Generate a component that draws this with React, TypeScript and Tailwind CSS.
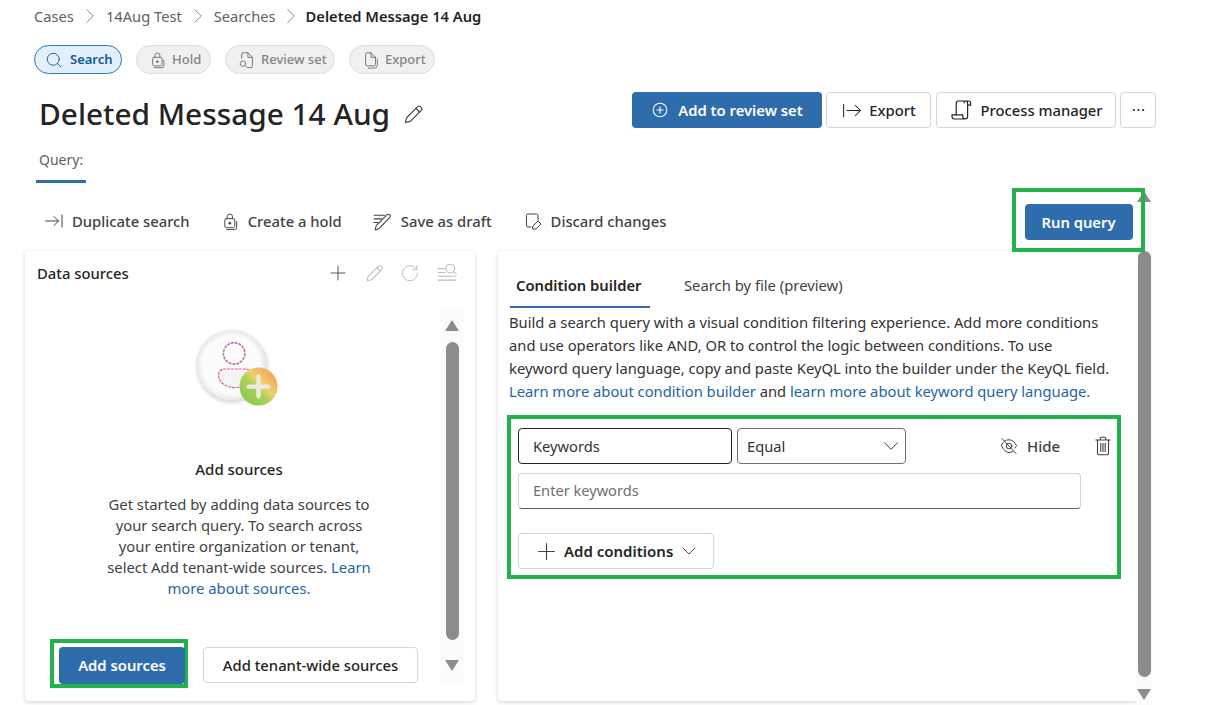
import { ChevronDown, ChevronRight, Plus, Search } from "lucide-react";

const font = "font-['Noto_Sans','Open_Sans',sans-serif]";

function Icon({ className, children }: { className?: string; children: React.ReactNode }) {
  return (
    <svg viewBox="0 0 20 20" fill="none" stroke="currentColor" strokeWidth="1" strokeLinecap="round" strokeLinejoin="round" className={className}>
      {children}
    </svg>
  );
}

const LockDoc = ({ className }: { className?: string }) => (
  <Icon className={className}>
    <rect x="4" y="7" width="10.5" height="9.5" rx="1.5" />
    <path d="M6.5 7V5a2.8 2.8 0 0 1 5.6 0v2" />
    <circle cx="9.2" cy="11.8" r="1" fill="currentColor" />
    <path d="M16.5 10v6.5a2 2 0 0 1-2 2H6" />
  </Icon>
);

const PencilIcon = ({ className }: { className?: string }) => (
  <Icon className={className}>
    <path d="M3 17l1-4.2L13.6 3.2a1.7 1.7 0 0 1 2.4 0l.8.8a1.7 1.7 0 0 1 0 2.4L7.2 16z" />
    <path d="M12.2 4.6l3.2 3.2" />
  </Icon>
);

function Pill({ label, icon, active, className }: { label: string; icon: React.ReactNode; active?: boolean; className?: string }) {
  return (
    <div
      className={
        (active
          ? "flex h-[29px] items-center gap-[7px] rounded-full border border-[#1a7fc9] bg-[#e3effb] pl-[10px] text-[13px] font-semibold text-[#0f5a96] "
          : "flex h-[29px] items-center gap-[5px] rounded-full border border-[#dcdcdc] bg-[#f0f0f0] pl-[12px] text-[13px] font-medium text-[#858585] ") + (className ?? "")
      }
    >
      {icon}
      {label}
    </div>
  );
}

function OutlineButton({ children, className }: { children: React.ReactNode; className?: string }) {
  return (
    <div className={"flex h-[36px] items-center justify-center rounded border border-[#d6d6d6] bg-white text-[#242424] " + (className ?? "")}>
      {children}
    </div>
  );
}

function ToolItem({ icon, label, className }: { icon: React.ReactNode; label: string; className?: string }) {
  return (
    <div className={"flex items-center gap-[8px] text-[14.8px] font-medium text-[#424242] " + (className ?? "")}>
      {icon}
      {label}
    </div>
  );
}

function Arrow({ down, className }: { down?: boolean; className?: string }) {
  return (
    <svg viewBox="0 0 14 11" className={className}>
      <path d={down ? "M0 0h14L7 11z" : "M7 0l7 11H0z"} fill="#8c8c8c" />
    </svg>
  );
}

function SourcesArt() {
  return (
    <svg viewBox="0 0 90 84" className="h-[82px] w-[88px]">
      <defs>
        <radialGradient id="plate" cx="0.5" cy="0.5" r="0.55">
          <stop offset="0.75" stopColor="#fbfbfb" />
          <stop offset="0.95" stopColor="#e2e2e2" />
          <stop offset="1" stopColor="#eeeeee" />
        </radialGradient>
        <linearGradient id="badge" x1="0" y1="1" x2="1" y2="0">
          <stop offset="0" stopColor="#7fc64a" />
          <stop offset="0.42" stopColor="#a9cf5c" />
          <stop offset="0.58" stopColor="#ecd168" />
          <stop offset="0.85" stopColor="#f4a860" />
          <stop offset="1" stopColor="#e9a0c0" />
        </linearGradient>
        <linearGradient id="dash" x1="0" y1="0" x2="1" y2="1">
          <stop offset="0" stopColor="#9a7bd8" />
          <stop offset="1" stopColor="#d8609a" />
        </linearGradient>
        <filter id="soft">
          <feGaussianBlur stdDeviation="1.6" />
        </filter>
      </defs>
      <circle cx="38" cy="40" r="37" fill="#cfcfcf" filter="url(#soft)" opacity="0.7" />
      <circle cx="37" cy="38" r="36" fill="url(#plate)" />
      <circle cx="40" cy="26" r="11" fill="none" stroke="url(#dash)" strokeWidth="1.6" strokeDasharray="3 1" />
      <path d="M24 48a6 6 0 0 1 6-6h22a6 6 0 0 1 6 6c0 8-8 13-17 13s-17-5-17-13z" fill="#f4f4f4" stroke="#d9608f" strokeWidth="1.2" strokeDasharray="3 1" />
      <circle cx="65" cy="60" r="19.5" fill="url(#badge)" />
      <path d="M65 50v20M55 60h20" stroke="#eeeae2" strokeWidth="4.5" strokeLinecap="round" />
    </svg>
  );
}

export default function App() {
  return (
    <div className={"flex h-[705px] w-[1208px] flex-col overflow-hidden bg-white " + font}>
      <div className="flex h-[32px] items-center pl-[34px] text-[14.7px] text-[#616161]">
        <span>Cases</span>
        <ChevronRight className="mx-[3px] h-[26px] w-[26px] text-[#777]" strokeWidth={0.8} />
        <span>14Aug Test</span>
        <ChevronRight className="mx-[3px] h-[26px] w-[26px] text-[#777]" strokeWidth={0.8} />
        <span>Searches</span>
        <ChevronRight className="mx-[2px] h-[26px] w-[26px] text-[#777]" strokeWidth={0.8} />
        <span className="font-semibold text-[#242424]">Deleted Message 14 Aug</span>
      </div>

      <div className="mt-[13px] flex gap-[14px] pl-[34px]">
        <Pill active className="w-[88px]" label="Search" icon={<Search className="h-[18px] w-[18px]" strokeWidth={1.2} />} />
        <Pill className="w-[75px]" label="Hold" icon={<LockDoc className="h-[18px] w-[18px] text-[#6e6e6e]" />} />
        <Pill
          className="w-[110px]"
          label="Review set"
          icon={
            <Icon className="h-[18px] w-[18px] text-[#6e6e6e]">
              <path d="M4 8V3.5A1.5 1.5 0 0 1 5.5 2H11l5 5v10a1.5 1.5 0 0 1-1.5 1.5H11" />
              <path d="M11 2v5h5" />
              <circle cx="5.5" cy="14" r="3" />
              <path d="M8 16.5l2 2" />
            </Icon>
          }
        />
        <Pill
          className="w-[86px]"
          label="Export"
          icon={
            <Icon className="h-[18px] w-[18px] text-[#6e6e6e]">
              <path d="M4 3.5A1.5 1.5 0 0 1 5.5 2H10l5 5v8a1.5 1.5 0 0 1-1.5 1.5h-8A1.5 1.5 0 0 1 4 15z" />
              <path d="M10 2v5h5" />
              <path d="M17 9v7a3 3 0 0 1-3 3H7" />
            </Icon>
          }
        />
      </div>

      <div className="mt-[18px] flex h-[43px] items-start justify-between pl-[39px] pr-[52px]">
        <div className="flex items-center gap-[12px]">
          <h1 className="text-[29.8px] leading-[44px] font-medium text-[#242424]">Deleted Message 14 Aug</h1>
          <PencilIcon className="h-[23px] w-[23px] text-[#424242]" />
        </div>
        <div className="flex gap-[4px]">
          <div className="flex h-[36px] w-[190px] items-center justify-center gap-[9px] rounded bg-[#2f6cab] text-[14.8px] font-semibold text-white">
            <svg viewBox="0 0 20 20" fill="none" stroke="currentColor" strokeWidth="1.2" className="h-[18px] w-[18px]">
              <circle cx="10" cy="10" r="7.5" />
              <path d="M10 6.2v7.6M6.2 10h7.6" />
            </svg>
            Add to review set
          </div>
          <OutlineButton className="w-[105px] gap-[7px] text-[14.8px] font-medium">
            <Icon className="h-[21px] w-[21px]">
              <path d="M2.5 4v12M5.5 10h13M13.5 5l5 5-5 5" />
            </Icon>
            Export
          </OutlineButton>
          <OutlineButton className="ml-[1px] w-[180px] gap-[7px] text-[14.8px] font-medium">
            <Icon className="h-[24px] w-[24px]">
              <path d="M6 14V4.5A2 2 0 0 1 8 2.5h8.5M16.5 2.5a1.5 1.5 0 0 1 1.5 1.5v2h-2.5V4a1.5 1.5 0 0 0-3 0" />
              <path d="M15.5 6v9.5a2 2 0 0 1-2 2H4.5a2 2 0 0 1-2-2V14h9v1.5a2 2 0 0 0 2 2" />
            </Icon>
            Process manager
          </OutlineButton>
          <OutlineButton className="w-[36px] text-[14px] font-bold">
            <svg viewBox="0 0 14 4" className="h-[4px] w-[13px]" fill="currentColor">
              <circle cx="2" cy="2" r="1.2" />
              <circle cx="7" cy="2" r="1.2" />
              <circle cx="12" cy="2" r="1.2" />
            </svg>
          </OutlineButton>
        </div>
      </div>

      <div className="mt-[12px] ml-[36px] h-[36px] w-[50px] border-b-[3px] border-[#2f6cab] pl-[3px] text-[14px] leading-[26px] text-[#616161]">
        Query:
      </div>

      <div className="-mt-[7px] flex min-h-0 flex-1">
        <div className="flex w-[1137px] shrink-0 flex-col pt-[12px]">
          <div className="flex h-[64px] shrink-0 items-center">
            <div className="mt-[2px] ml-[44px] flex items-center">
              <ToolItem
                label="Duplicate search"
                icon={
                  <Icon className="h-[20px] w-[20px]">
                    <path d="M1.5 10h13M10 5.5l4.5 4.5-4.5 4.5M18 4v12" />
                  </Icon>
                }
              />
              <ToolItem className="ml-[31px]" label="Create a hold" icon={<LockDoc className="h-[19px] w-[19px]" />} />
              <ToolItem
                className="ml-[30px]"
                label="Save as draft"
                icon={
                  <Icon className="h-[21px] w-[21px]">
                    <path d="M2 4h10M2 7.5h7M2 11h4" />
                    <path d="M3 18l1-4L14.5 3.5a1.6 1.6 0 0 1 2.3 0l.2.2a1.6 1.6 0 0 1 0 2.3L6.8 16.6z" />
                  </Icon>
                }
              />
              <ToolItem
                className="ml-[31px]"
                label="Discard changes"
                icon={
                  <Icon className="h-[20px] w-[20px]">
                    <path d="M15 9V4.5A1.5 1.5 0 0 0 13.5 3H5a1.5 1.5 0 0 0-1.5 1.5v10A1.5 1.5 0 0 0 5 16h3" />
                    <path d="M10 15l5-5 3 3-5 5h-3z" />
                  </Icon>
                }
              />
            </div>
            <div className="relative z-10 -mr-[8px] ml-auto flex h-[64px] w-[133px] items-center justify-center border-[4px] border-[#22b14c]">
              <div className="mt-[4px] flex h-[36px] w-[108px] items-center justify-center rounded bg-[#2f6cab] text-[14.8px] leading-[34px] font-semibold text-white">
                Run query
              </div>
            </div>
          </div>

          <div className="-mt-[1px] flex min-h-0 flex-1 pl-[25px]">
            <section className="flex h-[450px] w-[450px] shrink-0 flex-col rounded-[4px] bg-white shadow-[0_1px_4px_rgba(0,0,0,0.18)]">
              <div className="flex h-[44px] shrink-0 items-center pl-[12px] pr-[17px]">
                <span className="text-[14.8px] font-medium text-[#242424]">Data sources</span>
                <Plus className="ml-auto h-[24px] w-[24px] text-[#555]" strokeWidth={1} />
                <PencilIcon className="ml-[14px] h-[21px] w-[21px] text-[#bdbdbd]" />
                <Icon className="ml-[15px] h-[20px] w-[20px] text-[#bdbdbd]">
                  <path d="M16.5 6.5A7.5 7.5 0 1 0 17.5 10M16.8 2.5v4.2h-4.2" />
                </Icon>
                <Icon className="ml-[16px] h-[22px] w-[22px] text-[#bdbdbd]">
                  <path d="M2 6h6M2 9.5h6M2 13h16M2 16.5h16" />
                  <circle cx="13" cy="6" r="4" />
                  <path d="M16 9l2.5 2" />
                </Icon>
              </div>
              <div className="flex min-h-0 flex-1">
                <div className="flex w-[417px] shrink-0 flex-col">
                  <div className="flex w-[417px] flex-col items-center pl-[11px]">
                    <div className="mt-[33px] -ml-[1px]">
                      <SourcesArt />
                    </div>
                    <div className="mt-[47px] text-[15px] leading-[24px] font-medium text-[#242424]">Add sources</div>
                    <p className="mt-[13px] w-[272px] text-center text-[14.8px] leading-[21px] text-[#424242]">
                      Get started by adding data sources to your search query. To search across your entire organization or tenant, select Add tenant-wide sources.{" "}
                      <span className="text-[#2564a6]">Learn</span>
                      <br />
                      <span className="text-[#2564a6]">more about sources.</span>
                    </p>
                  </div>
                  <div className="mt-auto mb-[13px] flex items-start pl-[25px]">
                    <div className="flex h-[49px] w-[138px] items-start justify-end border-[4px] border-[#22b14c] bg-white pt-[4px]">
                      <div className="-mr-[1px] h-[37px] w-[126px] rounded-sm bg-[#2f6cab] text-center text-[14.8px] leading-[36px] font-semibold text-white">
                        Add sources
                      </div>
                    </div>
                    <OutlineButton className="mt-[8px] ml-[15px] w-[215px] text-[14.8px] font-medium">Add tenant-wide sources</OutlineButton>
                  </div>
                </div>
                <div className="mt-[12px] mb-[18px] -ml-[1px] flex w-[22px] flex-col items-center bg-[#fbfbfb] pt-[13px]">
                  <Arrow className="h-[11px] w-[14px]" />
                  <div className="mt-[11px] w-[13px] flex-1 rounded-full bg-[#8c8c8c]" />
                  <Arrow down className="mt-[20px] mb-[12px] h-[11px] w-[14px]" />
                </div>
              </div>
            </section>

            <section className="ml-[23px] flex h-[450px] w-[640px] shrink-0 flex-col rounded-[4px] bg-white px-[11px] shadow-[0_1px_4px_rgba(0,0,0,0.18)]">
              <div className="mt-[16px] flex h-[41px] shrink-0 items-start text-[14.8px]">
                <div className="ml-[1px] h-[41px] w-[140px] border-b-[2px] border-[#2f6cab] pl-[6px] leading-[37px] font-semibold text-[#242424]">
                  Condition builder
                </div>
                <div className="ml-[34px] leading-[37px] text-[#424242]">Search by file (preview)</div>
              </div>
              <p className="mt-[3px] w-[615px] text-[14.75px] leading-[23px] whitespace-nowrap text-[#333]">
                Build a search query with a visual condition filtering experience. Add more conditions
                <br />
                and use operators like AND, OR to control the logic between conditions. To use
                <br />
                keyword query language, copy and paste KeyQL into the builder under the KeyQL field.
                <br />
                <span className="text-[#2564a6]">Learn more about condition builder</span> and{" "}
                <span className="text-[#2564a6]">learn more about keyword query language.</span>
              </p>
              <div className="mt-[12px] -ml-[2px] h-[164px] w-[614px] border-[4px] border-[#22b14c] pt-[9px] pl-[7px]">
                <div className="flex h-[36px] items-center">
                  <div className="flex h-[36px] w-[214px] items-center rounded border border-[#242424] pl-[14px] text-[14.7px] text-[#333]">Keywords</div>
                  <div className="ml-[5px] flex h-[36px] w-[169px] items-center justify-between rounded border border-[#707070] pr-[1px] pl-[9px] text-[14.7px] text-[#333]">
                    Equal
                    <ChevronDown className="h-[26px] w-[26px] text-[#333]" strokeWidth={0.9} />
                  </div>
                  <div className="ml-[93px] flex items-center gap-[8px] text-[15px] font-medium text-[#424242]">
                    <Icon className="h-[20px] w-[20px]">
                      <path d="M3 2.5l14 15" />
                      <path d="M2.5 9.5c1.5-3.7 4-5.7 7.5-5.7 3 0 5.5 2 7.5 5.7-.5 1-1 1.8-1.6 2.6M14 15.4c-1.2.8-2.5 1.1-4 1.1-3 0-5.5-2.4-7.5-7" />
                      <circle cx="10" cy="10" r="2.8" />
                    </Icon>
                    Hide
                  </div>
                  <Icon className="ml-[32px] h-[22px] w-[22px] text-[#424242]">
                    <path d="M3.5 4.5h13M7.5 4.5V3a1 1 0 0 1 1-1h3a1 1 0 0 1 1 1v1.5" />
                    <path d="M5 4.5v12a1.5 1.5 0 0 0 1.5 1.5h7a1.5 1.5 0 0 0 1.5-1.5v-12" />
                    <path d="M8 7.5v7.5M10 7.5v7.5M12 7.5v7.5" />
                  </Icon>
                </div>
                <div className="mt-[9px] flex h-[36px] w-[563px] items-center rounded border border-[#d1d1d1] border-b-[#616161] pl-[14px] text-[14.6px] text-[#707070]">
                  Enter keywords
                </div>
                <div className="mt-[24px] flex h-[36px] w-[196px] items-center rounded border border-[#d6d6d6] pl-[14px] text-[15px] font-semibold text-[#242424]">
                  <Plus className="h-[27px] w-[27px] text-[#424242]" strokeWidth={1} />
                  <span className="ml-[4px]">Add conditions</span>
                  <ChevronDown className="ml-[4px] h-[24px] w-[24px] text-[#333]" strokeWidth={0.9} />
                </div>
              </div>
            </section>
          </div>
        </div>

        <div className="-ml-[1px] flex w-[16px] shrink-0 flex-col items-center bg-[#fbfbfb] pt-[15px]">
          <Arrow className="h-[11px] w-[14px]" />
          <div className="mt-[49px] h-[426px] w-[13px] rounded-full bg-[#8c8c8c]" />
          <Arrow down className="mt-[12px] h-[11px] w-[14px]" />
        </div>
      </div>
    </div>
  );
}
